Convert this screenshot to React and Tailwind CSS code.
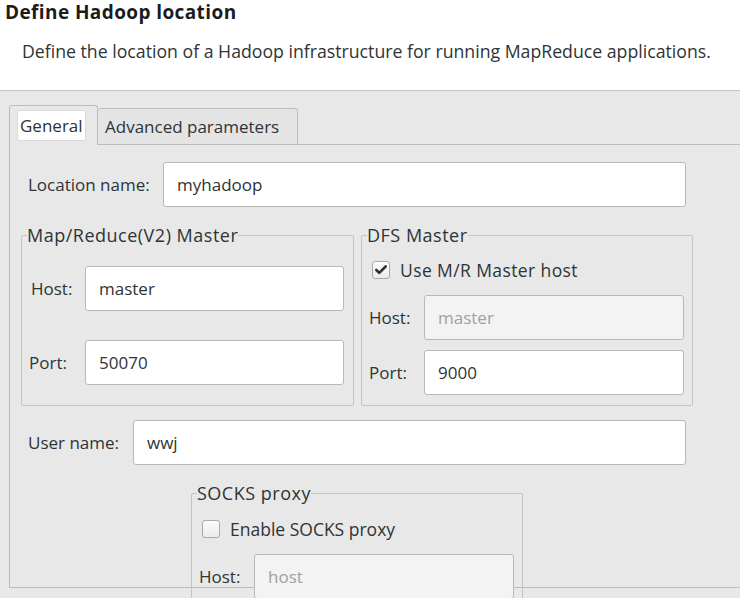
import { Check } from 'lucide-react';

const FONT = { fontFamily: '"Open Sans", "Noto Sans", "DejaVu Sans", sans-serif' };

function Checkbox({ checked }) {
  return (
    <span className="flex h-[18px] w-[18px] shrink-0 items-center justify-center rounded-[3px] border border-[#a8a8a8] bg-gradient-to-b from-[#fbfbfb] to-[#ececec] shadow-[inset_0_1px_0_white]">
      {checked && <Check size={14} strokeWidth={4.5} className="text-[#2e3436]" />}
    </span>
  );
}

function Field({ value, disabled, className = '' }) {
  return (
    <div className={`flex h-[45px] items-center rounded-[3px] border border-[#b8b8b8] px-[13px] text-[17px] ${disabled ? 'bg-[#f3f3f3] text-[#a0a0a0]' : 'bg-white text-[#2e3436]'} ${className}`}>
      {value}
    </div>
  );
}

function Group({ title, className = '', children }) {
  return (
    <fieldset className={`rounded-[2px] border border-[#c4c4c4] px-[5px] ${className}`}>
      <legend className="text-[18px] leading-[20px] tracking-[0.5px] text-[#2e3436]">{title}</legend>
      {children}
    </fieldset>
  );
}

export default function App() {
  return (
    <div style={FONT} className="h-[598px] w-[740px] overflow-hidden bg-[#e8e8e8] text-[#2e3436]">
      <div className="h-[91px] border-b border-[#c6c6c6] bg-white">
        <p className="pl-[5px] pt-[1px] text-[19px] font-bold leading-[22px] tracking-[0.4px] text-[#1c1c1c]">Define Hadoop location</p>
        <p className="mt-[17px] pl-[22px] text-[17.7px] leading-[22px]">
          Define the location of a Hadoop infrastructure for running MapReduce applications.
        </p>
      </div>

      <div className="pl-[9px] pt-[14px]">
        <div className="flex items-end">
          <div className="flex h-[40px] w-[89px] items-start rounded-t-[3px] border border-b-0 border-[#bcbcbc] px-[7px] pt-[4px]">
            <span className="flex h-[31px] items-center rounded-[2px] border border-[#dadada] bg-white px-[2px] text-[17px]">General</span>
          </div>
          <div className="flex h-[37px] w-[200px] items-center rounded-t-[3px] border border-l-0 border-[#bcbcbc] bg-[#e4e4e4] pl-[7px] text-[17px]">
            Advanced parameters
          </div>
          <div className="flex-1 border-b border-[#bcbcbc]" />
        </div>

        <div className="h-[443px] border-b border-l border-[#bcbcbc] pl-[11px] pt-[17px]">
          <div className="w-[672px]">
            <div className="flex items-center px-[7px]">
              <span className="w-[135px] text-[17px]">Location name:</span>
              <Field value="myhadoop" className="flex-1" />
            </div>

            <div className="mt-[18px] flex gap-[7px]">
              <Group title="Map/Reduce(V2) Master" className="w-[334px] pb-[20px]">
                <div className="mt-[21px] flex items-center pl-[4px] pr-[4px]">
                  <span className="w-[54px] text-[17px]">Host:</span>
                  <Field value="master" className="flex-1" />
                </div>
                <div className="mt-[29px] flex items-center pl-[2px] pr-[4px]">
                  <span className="w-[56px] text-[17px]">Port:</span>
                  <Field value="50070" className="flex-1" />
                </div>
              </Group>

              <Group title="DFS Master" className="w-[333px] pb-[9px]">
                <div className="mt-[12px] flex items-center gap-[10px] pl-[5px]">
                  <Checkbox checked />
                  <span className="text-[17.5px] tracking-[0.4px]">Use M/R Master host</span>
                </div>
                <div className="mt-[12px] flex items-center pl-[2px] pr-[3px]">
                  <span className="w-[55px] text-[17px]">Host:</span>
                  <Field value="master" disabled className="flex-1" />
                </div>
                <div className="mt-[10px] flex items-center pl-[2px] pr-[3px]">
                  <span className="w-[55px] text-[17px]">Port:</span>
                  <Field value="9000" className="flex-1" />
                </div>
              </Group>
            </div>

            <div className="mt-[14px] flex items-center px-[7px]">
              <span className="w-[105px] text-[17px]">User name:</span>
              <Field value="wwj" className="flex-1" />
            </div>

            <div className="mt-[18px] pl-[170px]">
              <Group title="SOCKS proxy" className="h-[120px] w-[332px]">
                <div className="mt-[13px] flex items-center gap-[10px] pl-[5px]">
                  <Checkbox />
                  <span className="text-[17.5px]">Enable SOCKS proxy</span>
                </div>
                <div className="mt-[12px] flex items-center pl-[2px] pr-[3px]">
                  <span className="w-[55px] text-[17px]">Host:</span>
                  <Field value="host" disabled className="flex-1" />
                </div>
              </Group>
            </div>
          </div>
        </div>
      </div>
    </div>
  );
}
